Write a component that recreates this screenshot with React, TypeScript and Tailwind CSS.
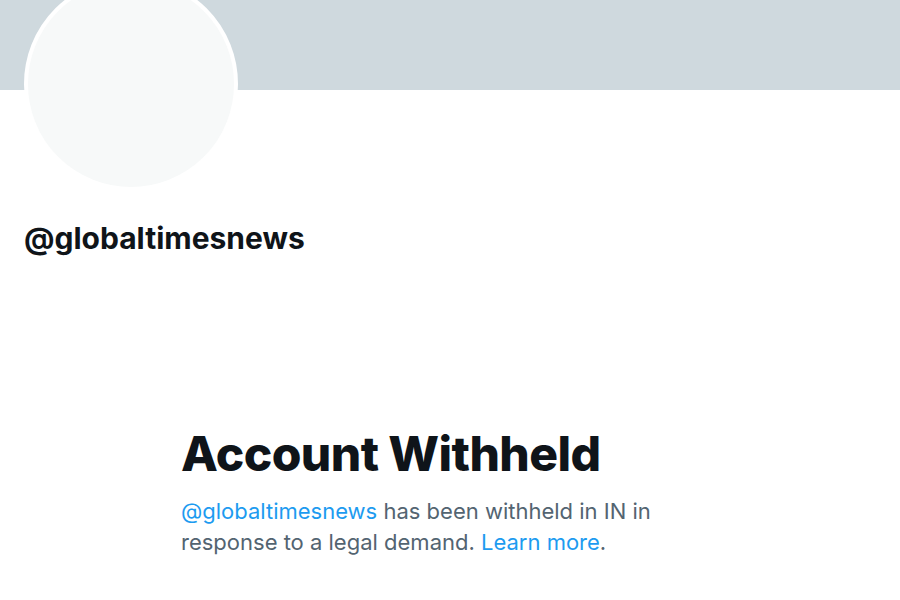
export default function App() {
  return (
    <div className="h-[600px] w-[900px] overflow-hidden bg-white font-['Inter',sans-serif]">
      <div className="h-[90px] bg-[#cfd9de]" />
      <div className="ml-[24px] -mt-[113px] h-[214px] w-[214px] rounded-full border-4 border-white bg-[#f7f9f9]" />
      <div className="ml-[24px] mt-[29px] text-[30px] font-bold leading-[36px] text-[#0f1419]">
        @globaltimesnews
      </div>
      <div className="ml-[181px] mt-[168px] w-[480px]">
        <h1 className="text-[48px] font-extrabold leading-[60px] tracking-[-0.6px] text-[#0f1419]">
          Account Withheld
        </h1>
        <p className="mt-[12px] text-[22px] leading-[31px] text-[#536471]">
          <span className="text-[#1d9bf0]">@globaltimesnews</span>
          <span> has been withheld in IN in</span>
          <br />
          <span>response to a legal demand. </span>
          <span className="text-[#1d9bf0]">Learn more</span>
          <span>.</span>
        </p>
      </div>
    </div>
  );
}
